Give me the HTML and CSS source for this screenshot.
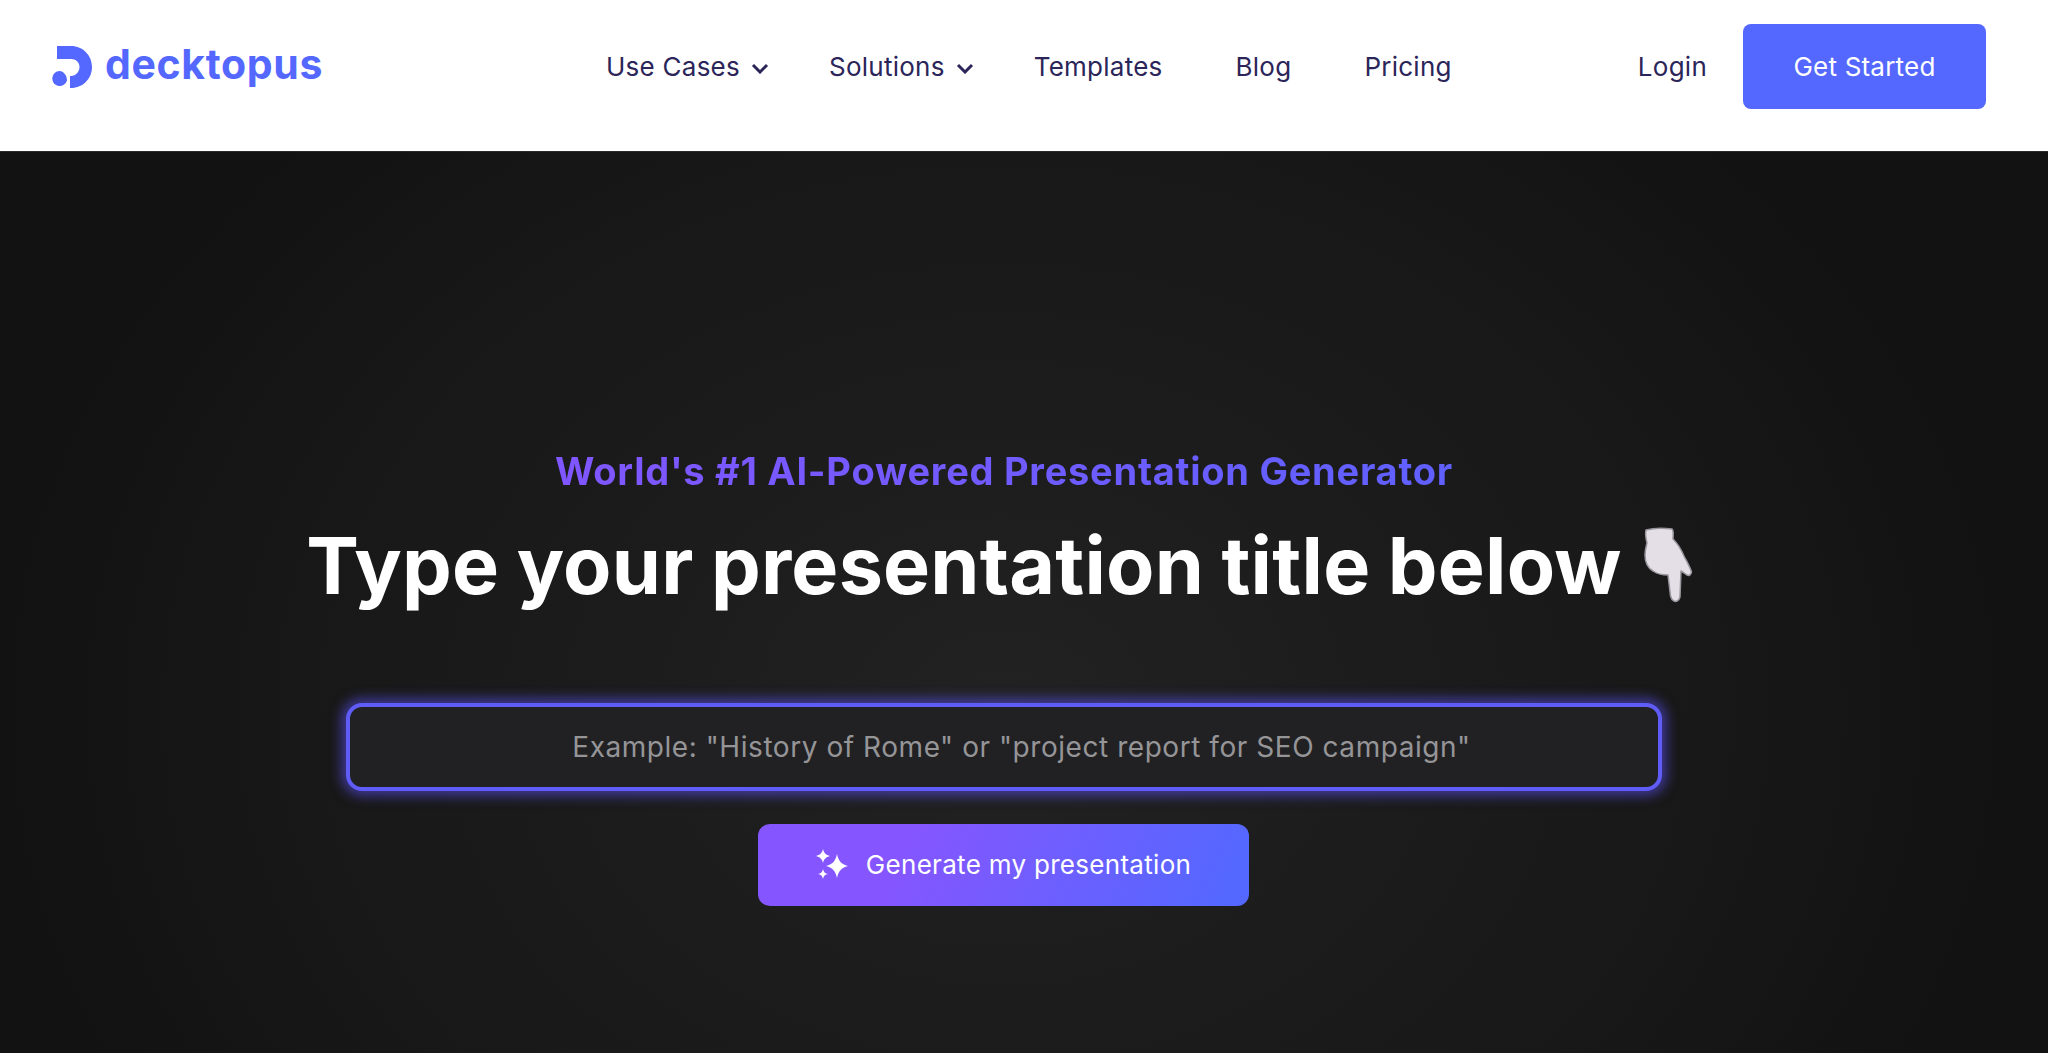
FILE: index.html
```html
<!DOCTYPE html>
<html lang="en">
<head>
<meta charset="utf-8">
<title>Decktopus</title>
<link rel="stylesheet" href="styles.css">
</head>
<body>
<header class="topbar">
  <a class="logo">
    <svg class="logo-mark" viewBox="0 0 40 42" width="40" height="42"><path d="M5 0H19C31 0 40 9.500 40 21C40 32.500 31 42 19 42H18V30H19C24 30 27.500 25.500 27.500 21C27.500 16.500 24 13 19 13H5Z" fill="#5468ff"/><path d="M7.500 25C11.500 25 15 29.500 15 34.500A7.500 7.500 0 1 1 7.500 25Z" fill="#5468ff"/></svg>
    <span class="logo-text">decktopus</span>
  </a>
  <nav class="nav">
    <a class="nav-link drop">Use Cases<svg class="chev" viewBox="0 0 18 11" width="18" height="11"><path d="M2 2L9 9L16 2" fill="none" stroke="#2b2559" stroke-width="3"/></svg></a>
    <a class="nav-link drop">Solutions<svg class="chev" viewBox="0 0 18 11" width="18" height="11"><path d="M2 2L9 9L16 2" fill="none" stroke="#2b2559" stroke-width="3"/></svg></a>
    <a class="nav-link">Templates</a>
    <a class="nav-link">Blog</a>
    <a class="nav-link">Pricing</a>
  </nav>
  <div class="auth">
    <a class="nav-link">Login</a>
    <a class="cta">Get Started</a>
  </div>
</header>
<main class="hero">
  <p class="eyebrow">World's #1 AI-Powered Presentation Generator</p>
  <h1 class="title">Type your presentation title below<svg class="hand" viewBox="0 0 50 78" width="50" height="78"><path d="M3 5C10 3 22 3 29 4C31 6 30 10 30 14C34 18 38 24 41 31C44 37 47 42 48.500 47C48 50 46 51 44 50C42 49 40 47 38 46L37 72C36 76 33 77 31 76C29 75 28 73 27.500 71L25 50C20 50 14 49 10 46C5 43 2 38 2 30C2 25 3 22 4 18C3 14 2 9 3 5Z" fill="#e4dfe6" stroke="#98959c" stroke-width="1.500" stroke-linejoin="round"/></svg></h1>
  <div class="field"><span class="placeholder">Example: "History of Rome" or "project report for SEO campaign"</span></div>
  <a class="generate">
    <svg class="spark" viewBox="0 0 32 30" width="32" height="30"><path d="M21 5C22.500 12 25 15 32 17C25 19 22.500 22 21 29C19.500 22 17 19 10 17C17 15 19.500 12 21 5Z M7 0C8 4 10 6 14 7C10 8 8 10 7 14C6 10 4 8 0 7C4 6 6 4 7 0Z M7 20C7.600 23 9 24.400 12 25C9 25.600 7.600 27 7 30C6.400 27 5 25.600 2 25C5 24.400 6.400 23 7 20Z" fill="#fff"/></svg>
    <span>Generate my presentation</span>
  </a>
</main>
</body>
</html>
```
FILE: styles.css
```css
* { box-sizing: border-box; }
html, body { margin: 0; height: 100%; }
body { font-family: "Inter", "Liberation Sans", sans-serif; overflow: hidden; background: #161616; }
.topbar { height: 152px; background: #fff; display: flex; align-items: center; padding: 0 62px 18px 52px; border-bottom: 1px solid #2a2a2a; }
.logo { display: flex; align-items: center; gap: 13px; width: 554px; }
.logo-mark { flex: none; }
.logo-text { font-size: 41px; font-weight: 700; letter-spacing: .65px; color: #5468ff; line-height: 1; position: relative; top: -2px; }
.nav { display: flex; align-items: center; gap: 73px; flex: 1; }
.nav-link { font-size: 26px; letter-spacing: .25px; color: #2b2559; line-height: 32px; display: flex; align-items: center; }
.drop { gap: 11px; margin-right: -13px; }
.chev { flex: none; margin-top: 4px; }
.auth { display: flex; align-items: center; gap: 36px; }
.cta { width: 243px; height: 85px; border-radius: 8px; background: #5468ff; color: #fff; font-size: 26px; letter-spacing: .2px; display: flex; align-items: center; justify-content: center; }
.hero { height: 901px; display: flex; flex-direction: column; align-items: center; padding: 296px 40px 0 0; background: radial-gradient(ellipse 1000px 800px at 1004px 560px, #222223 0%, #1b1b1c 45%, #181818 70%, #121212 100%); }
.eyebrow { margin: 0; font-size: 38px; line-height: 46px; font-weight: 700; letter-spacing: .75px; color: #7a56ff; background: linear-gradient(90deg, #8056ff, #6060ff); -webkit-background-clip: text; background-clip: text; -webkit-text-fill-color: transparent; }
.title { margin: 22px 0 0; font-size: 79px; line-height: 98px; font-weight: 700; letter-spacing: .2px; word-spacing: -1.500px; color: #fff; display: flex; align-items: center; }
.hand { flex: none; margin: 0 9px 3px 21px; }
.field { margin-top: 89px; width: 1316px; height: 88px; padding-left: 35px; border: 4px solid #5f5cf8; border-radius: 16px; background: #212123; box-shadow: 0 0 12px 5px rgba(91, 80, 245, .55); display: flex; align-items: center; justify-content: center; }
.placeholder { font-size: 28px; letter-spacing: .55px; color: #959598; }
.generate { margin: 33px 1px 0 0; width: 491px; height: 82px; padding-bottom: 2px; border-radius: 12px; background: linear-gradient(115deg, #8556ff 30%, #5468ff 95%); color: #fff; font-size: 26px; letter-spacing: .3px; display: flex; align-items: center; justify-content: center; gap: 18px; }
.spark { flex: none; }
```
